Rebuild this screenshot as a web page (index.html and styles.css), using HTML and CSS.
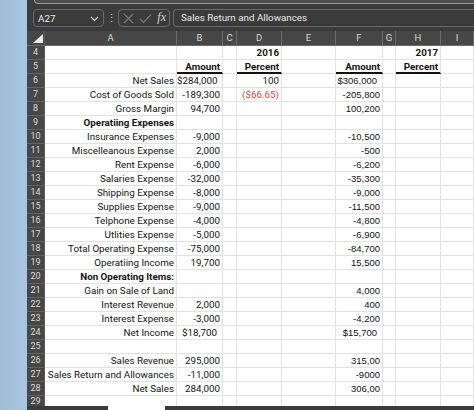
FILE: index.html
```html
<!DOCTYPE html>
<html>
<head>
<meta charset="utf-8">
<link rel="stylesheet" href="styles.css">
</head>
<body>
<div class="app">
  <div class="side"></div>
  <div class="main">
    <div class="ribbon"></div>
    <div class="fbar">
      <div class="namebox"><span>A27</span><svg class="chev" width="9" height="6" viewBox="0 0 9 6"><path d="M1 1 L4.5 4.5 L8 1" fill="none" stroke="#cfcfcf" stroke-width="1.2"/></svg></div>
      <div class="dots">&#8942;</div>
      <div class="icons">
        <svg width="11" height="11" viewBox="0 0 11 11"><path d="M1 1 L10 10 M10 1 L1 10" stroke="#7a7a7a" stroke-width="1.1"/></svg>
        <svg width="13" height="11" viewBox="0 0 13 11"><path d="M1 6 L4.5 9.5 L12 1.5" fill="none" stroke="#7a7a7a" stroke-width="1.1"/></svg>
        <span class="fx">fx</span>
      </div>
      <div class="formula">Sales Return and Allowances</div>
    </div>
    <div class="sheet">
      <div class="row head">
        <div class="rh corner"><svg width="10" height="9" viewBox="0 0 10 9"><path d="M10 0 L10 9 L0 9 Z" fill="#ececec"/></svg></div>
        <div class="h">A</div><div class="h">B</div><div class="h">C</div><div class="h">D</div><div class="h">E</div><div class="h">F</div><div class="h">G</div><div class="h">H</div><div class="h">I</div>
      </div>
      <div class="row"><div class="rh">4</div><div class="c"></div><div class="c"></div><div class="c"></div><div class="c b">2016</div><div class="c"></div><div class="c"></div><div class="c"></div><div class="c b">2017</div><div class="c"></div></div>
      <div class="row"><div class="rh">5</div><div class="c"></div><div class="c b ul">Amount</div><div class="c"></div><div class="c b ul">Percent</div><div class="c"></div><div class="c b ul">Amount</div><div class="c"></div><div class="c b ul">Percent</div><div class="c"></div></div>
      <div class="row"><div class="rh">6</div><div class="c">Net Sales</div><div class="c acc">$284,000</div><div class="c"></div><div class="c">100</div><div class="c"></div><div class="c ar acc">$306,000</div><div class="c"></div><div class="c"></div><div class="c"></div></div>
      <div class="row"><div class="rh">7</div><div class="c">Cost of Goods Sold</div><div class="c">-189,300</div><div class="c"></div><div class="c red">($66.65)</div><div class="c"></div><div class="c ar">-205,800</div><div class="c"></div><div class="c"></div><div class="c"></div></div>
      <div class="row"><div class="rh">8</div><div class="c">Gross Margin</div><div class="c">94,700</div><div class="c"></div><div class="c"></div><div class="c"></div><div class="c ar">100,200</div><div class="c"></div><div class="c"></div><div class="c"></div></div>
      <div class="row"><div class="rh">9</div><div class="c b">Operatiing Expenses</div><div class="c"></div><div class="c"></div><div class="c"></div><div class="c"></div><div class="c"></div><div class="c"></div><div class="c"></div><div class="c"></div></div>
      <div class="row"><div class="rh">10</div><div class="c">Insurance Expenses</div><div class="c">-9,000</div><div class="c"></div><div class="c"></div><div class="c"></div><div class="c ar">-10,500</div><div class="c"></div><div class="c"></div><div class="c"></div></div>
      <div class="row"><div class="rh">11</div><div class="c">Miscelleanous Expense</div><div class="c">2,000</div><div class="c"></div><div class="c"></div><div class="c"></div><div class="c ar">-500</div><div class="c"></div><div class="c"></div><div class="c"></div></div>
      <div class="row"><div class="rh">12</div><div class="c">Rent Expense</div><div class="c">-6,000</div><div class="c"></div><div class="c"></div><div class="c"></div><div class="c ar">-6,200</div><div class="c"></div><div class="c"></div><div class="c"></div></div>
      <div class="row"><div class="rh">13</div><div class="c">Salaries Expense</div><div class="c">-32,000</div><div class="c"></div><div class="c"></div><div class="c"></div><div class="c ar">-35,300</div><div class="c"></div><div class="c"></div><div class="c"></div></div>
      <div class="row"><div class="rh">14</div><div class="c">Shipping Expense</div><div class="c">-8,000</div><div class="c"></div><div class="c"></div><div class="c"></div><div class="c ar">-9,000</div><div class="c"></div><div class="c"></div><div class="c"></div></div>
      <div class="row"><div class="rh">15</div><div class="c">Supplies Expense</div><div class="c">-9,000</div><div class="c"></div><div class="c"></div><div class="c"></div><div class="c ar">-11,500</div><div class="c"></div><div class="c"></div><div class="c"></div></div>
      <div class="row"><div class="rh">16</div><div class="c">Telphone Expense</div><div class="c">-4,000</div><div class="c"></div><div class="c"></div><div class="c"></div><div class="c ar">-4,800</div><div class="c"></div><div class="c"></div><div class="c"></div></div>
      <div class="row"><div class="rh">17</div><div class="c">Utlities Expense</div><div class="c">-5,000</div><div class="c"></div><div class="c"></div><div class="c"></div><div class="c ar">-6,900</div><div class="c"></div><div class="c"></div><div class="c"></div></div>
      <div class="row"><div class="rh">18</div><div class="c">Total Operating Expense</div><div class="c">-75,000</div><div class="c"></div><div class="c"></div><div class="c"></div><div class="c ar">-84,700</div><div class="c"></div><div class="c"></div><div class="c"></div></div>
      <div class="row"><div class="rh">19</div><div class="c">Operatiing Income</div><div class="c">19,700</div><div class="c"></div><div class="c"></div><div class="c"></div><div class="c ar">15,500</div><div class="c"></div><div class="c"></div><div class="c"></div></div>
      <div class="row"><div class="rh">20</div><div class="c b">Non Operating Items:</div><div class="c"></div><div class="c"></div><div class="c"></div><div class="c"></div><div class="c"></div><div class="c"></div><div class="c"></div><div class="c"></div></div>
      <div class="row"><div class="rh">21</div><div class="c">Gain on Sale of Land</div><div class="c"></div><div class="c"></div><div class="c"></div><div class="c"></div><div class="c ar">4,000</div><div class="c"></div><div class="c"></div><div class="c"></div></div>
      <div class="row"><div class="rh">22</div><div class="c">Interest Revenue</div><div class="c">2,000</div><div class="c"></div><div class="c"></div><div class="c"></div><div class="c ar">400</div><div class="c"></div><div class="c"></div><div class="c"></div></div>
      <div class="row"><div class="rh">23</div><div class="c">Interest Expense</div><div class="c">-3,000</div><div class="c"></div><div class="c"></div><div class="c"></div><div class="c ar">-4,200</div><div class="c"></div><div class="c"></div><div class="c"></div></div>
      <div class="row"><div class="rh">24</div><div class="c">Net Income</div><div class="c acc">$18,700</div><div class="c"></div><div class="c"></div><div class="c"></div><div class="c ar acc">$15,700</div><div class="c"></div><div class="c"></div><div class="c"></div></div>
      <div class="row"><div class="rh">25</div><div class="c"></div><div class="c"></div><div class="c"></div><div class="c"></div><div class="c"></div><div class="c"></div><div class="c"></div><div class="c"></div><div class="c"></div></div>
      <div class="row"><div class="rh">26</div><div class="c">Sales Revenue</div><div class="c">295,000</div><div class="c"></div><div class="c"></div><div class="c"></div><div class="c ar">315,00</div><div class="c"></div><div class="c"></div><div class="c"></div></div>
      <div class="row"><div class="rh">27</div><div class="c">Sales Return and Allowances</div><div class="c">-11,000</div><div class="c"></div><div class="c"></div><div class="c"></div><div class="c ar">-9000</div><div class="c"></div><div class="c"></div><div class="c"></div></div>
      <div class="row"><div class="rh">28</div><div class="c">Net Sales</div><div class="c">284,000</div><div class="c"></div><div class="c"></div><div class="c"></div><div class="c ar">306,00</div><div class="c"></div><div class="c"></div><div class="c"></div></div>
      <div class="row"><div class="rh last">29</div><div class="c"></div><div class="c"></div><div class="c"></div><div class="c"></div><div class="c"></div><div class="c"></div><div class="c"></div><div class="c"></div><div class="c"></div></div>
    </div>
    <div class="bottombar"><div class="seg1"></div><div class="seg2"></div><div class="seg3"></div></div>
  </div>
</div>
</body>
</html>
```
FILE: styles.css
```css
* { box-sizing: border-box; }
html, body { margin: 0; padding: 0; }
body {
  background: #a6c2dc;
  font-family: Roboto, "Liberation Sans", sans-serif;
  overflow: hidden;
  width: 474px;
  height: 410px;
}
.app {
  display: grid;
  grid-template-columns: 27px 447px;
  width: 474px;
  height: 410px;
}
.side {
  background: linear-gradient(90deg, #9fbcd8 0%, #aac6df 100%);
}
.main {
  width: 447px;
  display: flex;
  flex-direction: column;
  background: #3b3b3b;
  overflow: hidden;
}
.ribbon {
  height: 4px;
  flex: none;
  margin-left: 7px;
  background: #4e4e4e;
  border-left: 1px solid #9b9b9b;
  border-bottom: 1px solid #9b9b9b;
  border-bottom-left-radius: 4px;
}
.fbar {
  flex: none;
  display: flex;
  align-items: center;
  height: 18px;
  margin-top: 5px;
  padding-left: 6px;
  color: #e8e8e8;
  font-size: 9.8px;
}
.namebox {
  width: 71px;
  height: 18px;
  border: 1px solid #6a6a6a;
  border-radius: 4px;
  display: flex;
  align-items: center;
  justify-content: space-between;
  padding: 0 4px 0 4px;
}
.chev { margin-top: 1px; }
.dots {
  width: 14px;
  text-align: center;
  color: #cfcfcf;
  font-size: 11px;
}
.icons {
  width: 52px;
  height: 18px;
  border: 1px solid #6a6a6a;
  border-radius: 4px;
  display: flex;
  align-items: center;
  justify-content: space-between;
  padding: 0 3px 0 4px;
}
.fx {
  font-family: "Liberation Serif", serif;
  font-style: italic;
  font-size: 12px;
  color: #d8d8d8;
  margin-top: -2px;
}
.formula {
  flex: 1;
  margin-left: 3px;
  height: 18px;
  border: 1px solid #6a6a6a;
  border-right: none;
  border-radius: 4px 0 0 4px;
  padding-left: 7px;
  line-height: 16px;
  white-space: nowrap;
}
.sheet {
  flex: 1;
  margin-top: 4px;
  overflow: hidden;
  background: #ffffff;
}
.row {
  display: grid;
  grid-template-columns: 18px 132px 46px 14px 45px 54px 47px 13px 45px 33px;
  height: 14px;
}
.row.head { height: 15px; background: #474747; }
.rh {
  background: #474747;
  color: #dadada;
  font-size: 9px;
  text-align: center;
  line-height: 13px;
  border-bottom: 1px solid #626262;
  border-right: 1px solid #5a5a5a;
}
.rh.last { line-height: 11px; }
.corner {
  display: flex;
  align-items: flex-end;
  justify-content: flex-end;
  padding: 0 1px 2px 0;
  border-bottom: 1px solid #6a6a6a;
}
.h {
  color: #d6d6d6;
  font-size: 9.5px;
  text-align: center;
  line-height: 14px;
  border-right: 1px solid #6c6c6c;
  border-bottom: 1px solid #6a6a6a;
}
.c {
  border-right: 1px solid #e2e2e2;
  border-bottom: 1px solid #e2e2e2;
  font-size: 9.8px;
  line-height: 13px;
  color: #141414;
  text-align: right;
  padding-right: 2px;
  white-space: nowrap;
  overflow: hidden;
}
.b { font-weight: bold; }
.ul { border-bottom: 2px solid #111111; }
.red { color: #e0453d; }
.ar {
  font-family: "Liberation Sans", Arial, sans-serif;
  font-size: 9.5px;
}
.acc { padding-right: 5px; }
.bottombar { flex: none; height: 4px; display: flex; }
.seg1 { width: 81px; background: #3b3b3b; }
.seg2 { width: 57px; background: #ffffff; }
.seg3 { flex: 1; background: #3b3b3b; }
```
